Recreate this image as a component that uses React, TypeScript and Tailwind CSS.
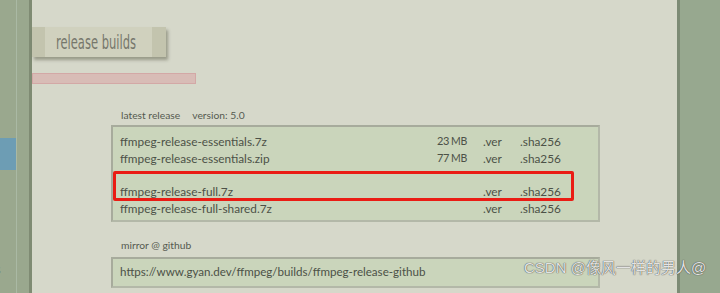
import React from "react";

const rows = [
  { name: "ffmpeg-release-essentials.7z", size: "23" },
  { name: "ffmpeg-release-essentials.zip", size: "77" },
  null,
  { name: "ffmpeg-release-full.7z", size: "" },
  { name: "ffmpeg-release-full-shared.7z", size: "" },
];

export default function App() {
  return (
    <div className="relative w-[720px] h-[293px] overflow-hidden flex bg-[#d6d8ca] font-['Lato',sans-serif]">
      {/* left strip */}
      <div className="w-[32px] h-full flex bg-[#9aa88e] border-r-[3px] border-[#7f8b73]">
        <div className="w-[17px] h-full flex flex-col border-r border-[#aab9a4]">
          <div className="mt-[138px] h-[32px] bg-[#6d9db4]" />
          <div className="mt-[93px] text-[13px] leading-none text-[#5d6656] -ml-[5px]">s</div>
        </div>
      </div>

      {/* main */}
      <div className="w-[645px] h-full flex flex-col">
        <div className="mt-[27px] w-[134px] h-[30px] flex bg-[#c3c4ae] shadow-[2px_3px_3px_rgba(80,80,60,0.45)]">
          <div className="ml-[13px] w-[107px] h-full bg-[#d0d1be] flex items-center">
            <span className="ml-[11px] text-[20px] leading-none text-[#76776c] font-['DejaVu_Sans_Condensed',sans-serif] [transform:scaleX(0.64)] origin-left whitespace-nowrap">
              release builds
            </span>
          </div>
        </div>

        <div className="mt-[16px] w-[164px] h-[11px] bg-[#d8bcb6] border border-[#d3a8a6]" />

        <div className="ml-[79px] mt-[26px] flex text-[10.3px] leading-none text-[#555a50]">
          <span className="ml-[10px]">latest release</span>
          <span className="ml-[12px]">version: 5.0</span>
        </div>

        <div className="relative ml-[79px] mt-[5px] w-[489px] h-[97px] bg-[#cad5bb] border-2 border-t-[#a7ab9c] border-l-[#a7ab9c] border-r-[#b3b8a8] border-b-[#b3b8a8] pt-[6px]">
          {rows.map((r, i) =>
            r ? (
              <div key={i} className="h-[17px] flex items-center text-[11.8px] text-[#4c5147]">
                <span className="ml-[7px] w-[300px] whitespace-nowrap">{r.name}</span>
                <span className="w-[47px] text-right text-[11px] tracking-[-0.3px]">
                  {r.size ? (
                    <>
                      {r.size}
                      <span className="ml-[2px] text-[10.5px]">MB</span>
                    </>
                  ) : null}
                </span>
                <span className="ml-[16px] w-[37px]">.ver</span>
                <span>.sha256</span>
              </div>
            ) : (
              <div key={i} className="h-[16px]" />
            )
          )}
          <div className="absolute left-[0px] top-[44px] w-[461px] h-[30px] border-[3px] border-[#ea1c14] rounded-[2px]" />
        </div>

        <div className="ml-[89px] mt-[18px] text-[10.3px] leading-none text-[#555a50]">mirror @ github</div>

        <div className="ml-[79px] mt-[6px] w-[489px] h-[31px] bg-[#cad5bb] border-2 border-t-[#a7ab9c] border-l-[#a7ab9c] border-r-[#b3b8a8] border-b-[#b3b8a8] flex items-center">
          <span className="ml-[7px] text-[11.6px] text-[#4c5147] whitespace-nowrap">
            https://www.gyan.dev/ffmpeg/builds/ffmpeg-release-github
          </span>
        </div>
      </div>

      {/* right strip */}
      <div className="flex-1 h-full bg-[#97a88f] border-l-[3px] border-[#7d8b75]" />

      <div className="absolute left-[524px] top-[258px] text-[15px] leading-[20px] text-[rgba(255,255,255,0.85)] font-['Liberation_Sans','Noto_Sans_CJK_SC',sans-serif] [text-shadow:0_0_1px_rgba(70,70,70,1),0_0_1px_rgba(70,70,70,0.8)] whitespace-nowrap">
        CSDN @像风一样的男人@
      </div>
    </div>
  );
}
